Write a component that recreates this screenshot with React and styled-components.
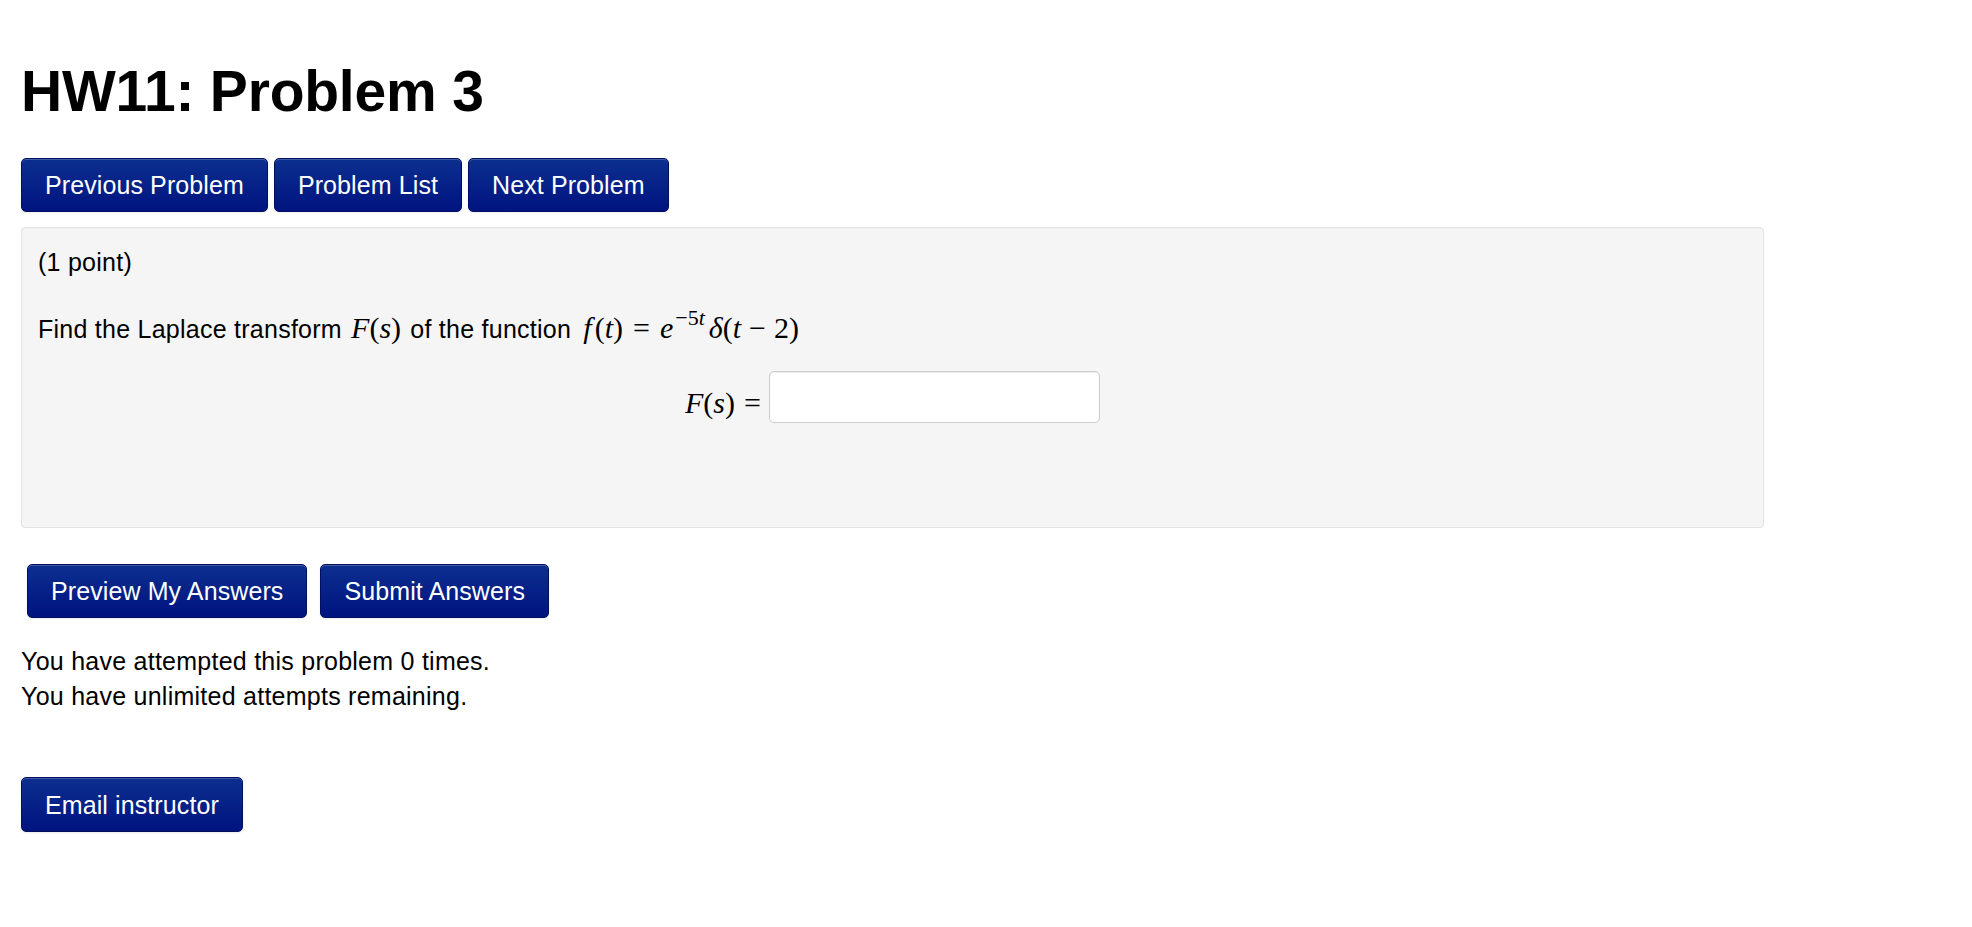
import React from "react"
import styled, { createGlobalStyle } from "styled-components"

const GlobalStyle = createGlobalStyle`
  html, body {
    margin: 0;
    padding: 0;
    background: #fff;
  }

  body {
    font-family: "Liberation Sans", Arial, Helvetica, sans-serif;
    font-size: 25px;
    line-height: 35px;
    letter-spacing: 0.25px;
    color: #000;
  }
`;

const Page = styled.div`
  padding: 59px 21px 40px 21px;
`;

const Title = styled.h1`
  margin: 0;
  font-size: 57px;
  line-height: 64px;
  font-weight: bold;
  letter-spacing: -0.2px;
`;

const ButtonRow = styled.div`
  display: flex;
  gap: ${p => p.gap || 6}px;
  margin-top: ${p => p.top || 0}px;
  padding-left: ${p => p.indent || 0}px;
`;

const Button = styled.button`
  height: ${p => p.tall ? 55 : 54}px;
  padding: 0 23px;
  border: 1px solid #00105c;
  border-radius: 5px;
  background: linear-gradient(to bottom, #0c2f8f 0%, #001380 100%);
  box-shadow: inset 0 1px 0 rgba(255, 255, 255, 0.22), 0 1px 2px rgba(0, 0, 0, 0.08);
  color: #fff;
  font-family: "Liberation Sans", Arial, Helvetica, sans-serif;
  font-size: 25px;
  line-height: 30px;
  letter-spacing: 0.1px;
  cursor: pointer;
  white-space: nowrap;
`;

const Well = styled.div`
  margin-top: 15px;
  width: 1743px;
  box-sizing: border-box;
  padding: 17px 16px 19px 16px;
  background: #f5f5f5;
  border: 1px solid #e3e3e3;
  border-radius: 4px;
  box-shadow: inset 0 1px 1px rgba(0, 0, 0, 0.03);
`;

const Para = styled.p`
  margin: 0 0 ${p => p.bottom || 0}px 0;
`;

const Math = styled.span`
  font-family: "Liberation Serif", "Times New Roman", serif;
  font-size: 30px;
  line-height: 1;
  letter-spacing: 0;
  white-space: nowrap;
  margin: 0 2px;
`;

const V = styled.i`
  font-style: italic;
  margin: 0 ${p => p.wide ? 3 : 0}px 0 ${p => p.wide ? 3 : 0}px;
`;

const Sup = styled.sup`
  font-size: 22px;
  line-height: 0;
  vertical-align: 13px;
  margin: 0 4px 0 2px;
`;

const Op = styled.span`
  margin: 0 ${p => p.after ?? p.space ?? 10}px 0 ${p => p.space ?? 10}px;
`;

const AnswerRow = styled.div`
  display: flex;
  justify-content: center;
  align-items: flex-end;
  margin: 24px 0 85px 0;
`;

const Label = styled(Math)`
  display: block;
  padding-bottom: 5px;
  margin: 0;
`;

const AnswerInput = styled.input`
  width: 331px;
  height: 52px;
  box-sizing: border-box;
  padding: 4px 10px;
  border: 1px solid #ccc;
  border-radius: 5px;
  background: #fff;
  box-shadow: inset 0 1px 1px rgba(0, 0, 0, 0.075);
  font-family: "Liberation Sans", Arial, sans-serif;
  font-size: 25px;
  outline: none;
`;

const Attempts = styled.div`
  margin-top: 26px;
`;

export default function App() {
  return (
    <>
      <GlobalStyle />
      <Page>
        <Title>HW11: Problem 3</Title>

        <ButtonRow top={35}>
          <Button>Previous Problem</Button>
          <Button>Problem List</Button>
          <Button>Next Problem</Button>
        </ButtonRow>

        <Well>
          <Para bottom={32}>(1 point)</Para>
          <Para>
            Find the Laplace transform{" "}
            <Math><V>F</V>(<V>s</V>)</Math>
            {" "}of the function{" "}
            <Math>
              <V wide>f</V>(<V>t</V>)<Op>=</Op><V>e</V><Sup>−5<V>t</V></Sup><V>δ</V>(<V>t</V><Op space={8}>−</Op>2)
            </Math>
          </Para>

          <AnswerRow>
            <Label><V>F</V>(<V>s</V>)<Op space={9} after={8}>=</Op></Label>
            <AnswerInput type="text" />
          </AnswerRow>
        </Well>

        <ButtonRow top={36} gap={13} indent={6}>
          <Button>Preview My Answers</Button>
          <Button>Submit Answers</Button>
        </ButtonRow>

        <Attempts>
          You have attempted this problem 0 times.
          <br />
          You have unlimited attempts remaining.
        </Attempts>

        <ButtonRow top={63}>
          <Button tall>Email instructor</Button>
        </ButtonRow>
      </Page>
    </>
  )
}
